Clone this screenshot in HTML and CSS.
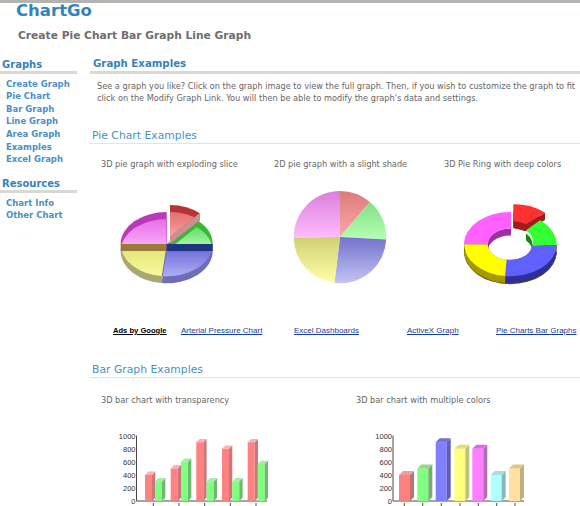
FILE: index.html
```html
<!DOCTYPE html>
<html lang="en">
<head>
<meta charset="utf-8">
<title>ChartGo</title>
<link rel="stylesheet" href="styles.css">
</head>
<body>
<header class="site-header">
  <h1 class="logo">ChartGo</h1>
  <p class="tagline">Create Pie Chart Bar Graph Line Graph</p>
</header>
<div class="page">
  <nav class="sidebar">
    <h2 class="side-title">Graphs</h2>
    <ul class="side-list">
      <li>Create Graph</li><li>Pie Chart</li><li>Bar Graph</li><li>Line Graph</li><li>Area Graph</li><li>Examples</li><li>Excel Graph</li>
    </ul>
    <h2 class="side-title side-title-second">Resources</h2>
    <ul class="side-list">
      <li>Chart Info</li><li>Other Chart</li>
    </ul>
  </nav>
  <main class="main">
    <h2 class="main-title">Graph Examples</h2>
    <p class="intro">See a graph you like? Click on the graph image to view the full graph. Then, if you wish to customize the graph to fit<br>click on the Modify Graph Link. You will then be able to modify the graph's data and settings.</p>

    <h3 class="section-title">Pie Chart Examples</h3>
    <div class="pie-grid">
      <figure class="chart">
        <figcaption>3D pie graph with exploding slice</figcaption>
        <svg class="pie pie-one" viewBox="110 185 120 100" width="120" height="100">
          <defs>
            <linearGradient id="gm" x1="0" y1="0" x2="0" y2="1"><stop offset="0" stop-color="#e66fe6"/><stop offset="1" stop-color="#ffb4ff"/></linearGradient>
            <linearGradient id="gr" x1="0" y1="0" x2="0" y2="1"><stop offset="0" stop-color="#e27070"/><stop offset="1" stop-color="#ffb0b0"/></linearGradient>
            <linearGradient id="gg" x1="0" y1="0" x2="0" y2="1"><stop offset="0" stop-color="#66dc66"/><stop offset="1" stop-color="#b8ffb8"/></linearGradient>
            <linearGradient id="gb" x1="0" y1="0" x2="0" y2="1"><stop offset="0" stop-color="#7272dc"/><stop offset="1" stop-color="#c0c0fa"/></linearGradient>
            <linearGradient id="gy" x1="0" y1="0" x2="0" y2="1"><stop offset="0" stop-color="#e6e67c"/><stop offset="1" stop-color="#ffffa8"/></linearGradient>
            <path id="p1m" d="M166.7 243L120.7 243A46 32 0 0 1 166.7 211Z"/>
            <path id="p1r" d="M170 236L170 204A46 32 0 0 1 200 212.3Z"/>
            <path id="p1g" d="M166.7 243L196.7 219A46 32 0 0 1 212.7 243Z"/>
            <path id="p1b" d="M166.7 243L212.7 243A46 32 0 0 1 161.7 275Z"/>
            <path id="p1y" d="M166.7 243L161.7 275A46 32 0 0 1 120.7 243Z"/>
            <clipPath id="c1m"><use href="#p1m"/></clipPath>
            <clipPath id="c1r"><use href="#p1r"/></clipPath>
            <clipPath id="c1g"><use href="#p1g"/></clipPath>
            <clipPath id="c1b"><use href="#p1b"/></clipPath>
            <clipPath id="c1y"><use href="#p1y"/></clipPath>
          </defs>
          <g fill="#a8a870"><use href="#p1y"/><use href="#p1y" y="7"/></g>
          <g fill="#6d6db8"><use href="#p1b"/><use href="#p1b" y="7"/></g>
          <g fill="#b83ab8"><use href="#p1m"/><use href="#p1m" y="7"/></g>
          <g fill="#38b838"><use href="#p1g"/><use href="#p1g" y="7"/></g>
          <g fill="#b83434"><use href="#p1r"/><use href="#p1r" y="7"/></g>
          <path d="M170 243L200 219.3L200 212.3L170 236Z" fill="#c89090"/>
          <g clip-path="url(#c1y)"><use href="#p1y" y="7" fill="url(#gy)"/></g>
          <g clip-path="url(#c1b)"><use href="#p1b" y="7" fill="url(#gb)"/></g>
          <g clip-path="url(#c1m)"><use href="#p1m" y="7" fill="url(#gm)"/></g>
          <g clip-path="url(#c1g)"><use href="#p1g" y="7" fill="url(#gg)"/></g>
          <g clip-path="url(#c1r)"><use href="#p1r" y="7" fill="url(#gr)"/></g>
          <rect x="120.7" y="243" width="46" height="7" fill="#9a7a3a"/>
          <rect x="166.7" y="243" width="46" height="7" fill="#1e3580"/>
        </svg>
      </figure>
      <figure class="chart">
        <figcaption>2D pie graph with a slight shade</figcaption>
        <svg class="pie pie-two" viewBox="280 185 120 100" width="120" height="100">
          <defs>
            <linearGradient id="hm" x1="0" y1="0" x2="0" y2="1"><stop offset="0" stop-color="#da7eda"/><stop offset="1" stop-color="#ffbcff"/></linearGradient>
            <linearGradient id="hr" x1="0" y1="0" x2="0" y2="1"><stop offset="0" stop-color="#dc7c7c"/><stop offset="1" stop-color="#ffa6a6"/></linearGradient>
            <linearGradient id="hg" x1="0" y1="0" x2="0" y2="1"><stop offset="0" stop-color="#84e084"/><stop offset="1" stop-color="#b4ffb4"/></linearGradient>
            <linearGradient id="hb" x1="0" y1="0" x2="0" y2="1"><stop offset="0" stop-color="#7272cc"/><stop offset="1" stop-color="#c4c4f4"/></linearGradient>
            <linearGradient id="hy" x1="0" y1="0" x2="0" y2="1"><stop offset="0" stop-color="#d0d072"/><stop offset="1" stop-color="#ffffaa"/></linearGradient>
          </defs>
          <path d="M340 236L340 190A46.3 46.3 0 0 1 370 201Z" fill="url(#hr)"/>
          <path d="M340 236L370 201A46.3 46.3 0 0 1 386.2 238.5Z" fill="url(#hg)"/>
          <path d="M340 236L386.2 238.5A46.3 46.3 0 0 1 334.5 282Z" fill="url(#hb)"/>
          <path d="M340 236L334.5 282A46.3 46.3 0 0 1 293.7 236.5Z" fill="url(#hy)"/>
          <path d="M340 236L293.7 236.5A46.3 46.3 0 0 1 340 190Z" fill="url(#hm)"/>
        </svg>
      </figure>
      <figure class="chart">
        <figcaption>3D Pie Ring with deep colors</figcaption>
        <svg class="pie pie-three" viewBox="455 185 110 100" width="110" height="100">
          <defs>
            <path id="r1" d="M513.3 203.3A46 32 0 0 1 545 211.7L526 223.3A22 15 0 0 0 513.3 220Z"/>
            <path id="r2" d="M540 219.3A46.3 32.5 0 0 1 556.7 244L532.3 245A22.3 15.7 0 0 0 526 229.3Z"/>
            <path id="r3" d="M556.7 244A46.3 32.5 0 0 1 505 275L506.7 258.6A22.3 15.7 0 0 0 532.3 245Z"/>
            <path id="r4" d="M505 275A46.3 32.5 0 0 1 464 243.3L487.7 243.3A22.3 15.7 0 0 0 506.7 258.6Z"/>
            <path id="r5" d="M464 243.3A46.3 32.5 0 0 1 511 211L511 227.6A22.3 15.7 0 0 0 487.7 243.3Z"/>
            <clipPath id="hole"><ellipse cx="510" cy="243.3" rx="22.3" ry="15.7"/></clipPath>
          </defs>
          <path d="M464 243.3L464 250.3A46.3 32.5 0 0 0 556.7 251L556.7 244L510 243Z" fill="#5a5a10"/>
          <use href="#r4" y="7" fill="#a89800"/>
          <use href="#r3" y="7" fill="#2f2f98"/>
          <g clip-path="url(#hole)">
            <path d="M487 225H511V262H487Z" fill="#a030a0"/>
            <path d="M526 225H534V262H526Z" fill="#108a10"/>
            <ellipse cx="510" cy="250.3" rx="22.3" ry="15.7" fill="#fff"/>
          </g>
          <use href="#r1" y="7" fill="#a01c1c"/>
          <path d="M545 211.7L545 218.7L526 230.3L526 223.3Z" fill="#a01c1c"/>
          <path d="M513.3 220L513.3 227L526 230.3L526 223.3Z" fill="#a01c1c"/>
          <use href="#r1" fill="#ff3030"/>
          <use href="#r2" fill="#33ff33"/>
          <use href="#r3" fill="#6060ff"/>
          <use href="#r4" fill="#ffff00"/>
          <use href="#r5" fill="#ff60ff"/>
        </svg>
      </figure>
    </div>
    <div class="ads">
      <span class="ads-label">Ads by Google</span>
      <a class="ad ad-one">Arterial Pressure Chart</a>
      <a class="ad ad-two">Excel Dashboards</a>
      <a class="ad ad-three">ActiveX Graph</a>
      <a class="ad ad-four">Pie Charts Bar Graphs</a>
    </div>

    <h3 class="section-title section-title-bar">Bar Graph Examples</h3>
    <div class="bar-grid">
      <figure class="chart">
        <figcaption>3D bar chart with transparency</figcaption>
        <svg class="bars bars-one" viewBox="115 430 155 76" width="155" height="76">
          <g class="axis-labels" text-anchor="end">
            <text x="135.5" y="438.5">1000</text><text x="135.5" y="451.5">800</text><text x="135.5" y="464.5">600</text><text x="135.5" y="477.7">400</text><text x="135.5" y="490.8">200</text><text x="135.5" y="503.8">0</text>
          </g>
          <path d="M136.5 435.5V501M136.5 501H267" class="axis"/>
          <path d="M153.3 503V506M179 503V506M204.7 503V506M230.3 503V506M256 503V506" class="axis"/>
          <g fill="#ff8282"><rect x="145" y="474.9" width="7" height="26"/><rect x="170.7" y="468.4" width="7" height="32.6"/><rect x="196.3" y="442.2" width="7" height="58.8"/><rect x="222" y="448.8" width="7" height="52.2"/><rect x="247.7" y="442.2" width="7" height="58.8"/></g>
          <g fill="#c87878"><path d="M152 474.9l3.3-3.3V497.7L152 501Z"/><path d="M177.7 468.4l3.3-3.3V497.7L177.7 501Z"/><path d="M203.3 442.2l3.3-3.3V497.7L203.3 501Z"/><path d="M229 448.8l3.3-3.3V497.7L229 501Z"/><path d="M254.7 442.2l3.3-3.3V497.7L254.7 501Z"/></g>
          <g fill="#ffb0b0"><path d="M145 474.9l3.3-3.3h7l-3.3 3.3Z"/><path d="M170.7 468.4l3.3-3.3h7l-3.3 3.3Z"/><path d="M196.3 442.2l3.3-3.3h7l-3.3 3.3Z"/><path d="M222 448.8l3.3-3.3h7l-3.3 3.3Z"/><path d="M247.7 442.2l3.3-3.3h7l-3.3 3.3Z"/></g>
          <g fill="#80ff80"><rect x="155" y="481.4" width="7" height="19.6"/><rect x="181" y="461.8" width="7" height="39.2"/><rect x="206.7" y="481.4" width="7" height="19.6"/><rect x="232.3" y="481.4" width="7" height="19.6"/><rect x="257.7" y="464" width="7" height="37"/></g>
          <g fill="#70b870"><path d="M162 481.4l3.3-3.3V497.7L162 501Z"/><path d="M188 461.8l3.3-3.3V497.7L188 501Z"/><path d="M213.7 481.4l3.3-3.3V497.7L213.7 501Z"/><path d="M239.3 481.4l3.3-3.3V497.7L239.3 501Z"/><path d="M264.7 464l3.3-3.3V497.7L264.7 501Z"/></g>
          <g fill="#a8e8a8"><path d="M155 481.4l3.3-3.3h7l-3.3 3.3Z"/><path d="M181 461.8l3.3-3.3h7l-3.3 3.3Z"/><path d="M206.7 481.4l3.3-3.3h7l-3.3 3.3Z"/><path d="M232.3 481.4l3.3-3.3h7l-3.3 3.3Z"/><path d="M257.7 464l3.3-3.3h7l-3.3 3.3Z"/></g>
        </svg>
      </figure>
      <figure class="chart">
        <figcaption>3D bar chart with multiple colors</figcaption>
        <svg class="bars bars-two" viewBox="372 430 160 76" width="160" height="76">
          <g class="axis-labels" text-anchor="end">
            <text x="392" y="438.5">1000</text><text x="392" y="451.5">800</text><text x="392" y="464.5">600</text><text x="392" y="477.7">400</text><text x="392" y="490.8">200</text><text x="392" y="503.8">0</text>
          </g>
          <path d="M393 435.5V501M393 501H524" class="axis"/>
          <path d="M404.3 503V506M422.7 503V506M441.3 503V506M460 503V506M478.3 503V506M496.7 503V506M515 503V506" class="axis"/>
          <rect x="399" y="474.9" width="11" height="26" fill="#ff8080"/><path d="M410 474.9l4-4V497L410 501Z" fill="#c07070"/><path d="M399 474.9l4-4h11l-4 4Z" fill="#e8a0a0"/>
          <rect x="417.3" y="468.4" width="11" height="32.6" fill="#80ff80"/><path d="M428.3 468.4l4-4V497L428.3 501Z" fill="#70b070"/><path d="M417.3 468.4l4-4h11l-4 4Z" fill="#90d890"/>
          <rect x="435.7" y="442.2" width="11" height="58.8" fill="#8080ff"/><path d="M446.7 442.2l4-4V497L446.7 501Z" fill="#5e5eb8"/><path d="M435.7 442.2l4-4h11l-4 4Z" fill="#7070d8"/>
          <rect x="454.3" y="448.8" width="11" height="52.2" fill="#ffff80"/><path d="M465.3 448.8l4-4V497L465.3 501Z" fill="#c0c080"/><path d="M454.3 448.8l4-4h11l-4 4Z" fill="#e0e070"/>
          <rect x="472.3" y="448.8" width="11" height="52.2" fill="#ff80ff"/><path d="M483.3 448.8l4-4V497L483.3 501Z" fill="#b070b0"/><path d="M472.3 448.8l4-4h11l-4 4Z" fill="#e068e0"/>
          <rect x="490.7" y="474.9" width="11" height="26" fill="#b0ffff"/><path d="M501.7 474.9l4-4V497L501.7 501Z" fill="#88b8b8"/><path d="M490.7 474.9l4-4h11l-4 4Z" fill="#a0e0e0"/>
          <rect x="509" y="468.4" width="11" height="32.6" fill="#ffe0a0"/><path d="M520 468.4l4-4V497L520 501Z" fill="#c0b080"/><path d="M509 468.4l4-4h11l-4 4Z" fill="#e0c880"/>
        </svg>
      </figure>
    </div>
  </main>
</div>
</body>
</html>
```
FILE: styles.css
```css
html, body {
  margin: 0;
  padding: 0;
  background: #fff;
}
body {
  width: 580px;
  height: 506px;
  overflow: hidden;
  font-family: "DejaVu Sans", Verdana, sans-serif;
  color: #555;
}
.site-header {
  height: 55px;
  box-sizing: border-box;
  border-top: 3px solid #b4b4ae;
  padding-left: 16px;
}
.logo {
  margin: 0;
  font-size: 16.5px;
  line-height: 16px;
  font-weight: bold;
  color: #3583bb;
}
.tagline {
  margin: 9px 0 0 2px;
  font-size: 10.7px;
  line-height: 16px;
  font-weight: bold;
  color: #6e6e6e;
}
.page {
  display: flex;
  align-items: flex-start;
}
.sidebar {
  width: 77px;
  margin-right: 13px;
  flex: none;
}
.side-title {
  margin: 0;
  padding: 4px 0 0 2px;
  font-size: 10px;
  line-height: 12px;
  font-weight: bold;
  color: #3583bb;
  border-bottom: 3px solid #d8d8d8;
}
.side-title-second {
  margin-top: 12px;
  padding-top: 0;
}
.side-list {
  list-style: none;
  margin: 0;
  padding: 3.7px 0 0 6px;
  font-size: 8.5px;
  line-height: 12.6px;
  font-weight: bold;
  color: #4a90c4;
}
.main {
  width: 490px;
  flex: none;
}
.main-title {
  margin: 0;
  padding: 3px 0 1px 3px;
  font-size: 10.2px;
  line-height: 12px;
  font-weight: bold;
  color: #3583bb;
  border-bottom: 3px solid #d8d8d8;
}
.intro {
  margin: 6px 0 0 7px;
  font-size: 8.2px;
  line-height: 12px;
  color: #666;
  white-space: nowrap;
}
.section-title {
  margin: 25px 0 0;
  padding: 0 0 0 2px;
  font-size: 10.8px;
  line-height: 14px;
  font-weight: normal;
  color: #4a90c4;
  border-bottom: 1px solid #e4e4e4;
}
.section-title-bar {
  margin-top: 26px;
}
.pie-grid {
  display: grid;
  grid-template-columns: 173px 170px 136px;
  padding: 14px 0 0 11px;
  height: 152px;
}
.chart {
  margin: 0;
}
.chart figcaption {
  font-size: 8.2px;
  line-height: 12px;
  color: #666;
  white-space: nowrap;
}
.chart svg {
  display: block;
}
.pie {
  margin-top: 16px;
}
.pie-one { margin-left: 9px; }
.pie-two { margin-left: 6px; }
.pie-three { margin-left: 11px; }
.ads {
  display: flex;
  height: 12px;
  font-family: "Liberation Sans", Arial, sans-serif;
  font-size: 8px;
  line-height: 12px;
  padding-left: 23px;
  margin-top: 15px;
  white-space: nowrap;
}
.ads-label {
  font-weight: bold;
  font-size: 7.6px;
  color: #000;
  text-decoration: underline;
  width: 68px;
}
.ad {
  color: #1a3ca8;
  text-decoration: underline;
}
.ad-one { width: 113px; }
.ad-two { width: 113px; }
.ad-three { width: 89px; }
.bar-grid {
  display: grid;
  grid-template-columns: 255px 220px;
  padding: 16px 0 0 11px;
}
.bars { margin-top: 24px; }
.bars-one { margin-left: 14px; }
.bars-two { margin-left: 16px; }
.axis-labels {
  font-family: "Liberation Sans", Arial, sans-serif;
  font-size: 7.5px;
  fill: #333;
}
.axis {
  fill: none;
  stroke: #4a4a44;
  stroke-width: 1;
}
```
